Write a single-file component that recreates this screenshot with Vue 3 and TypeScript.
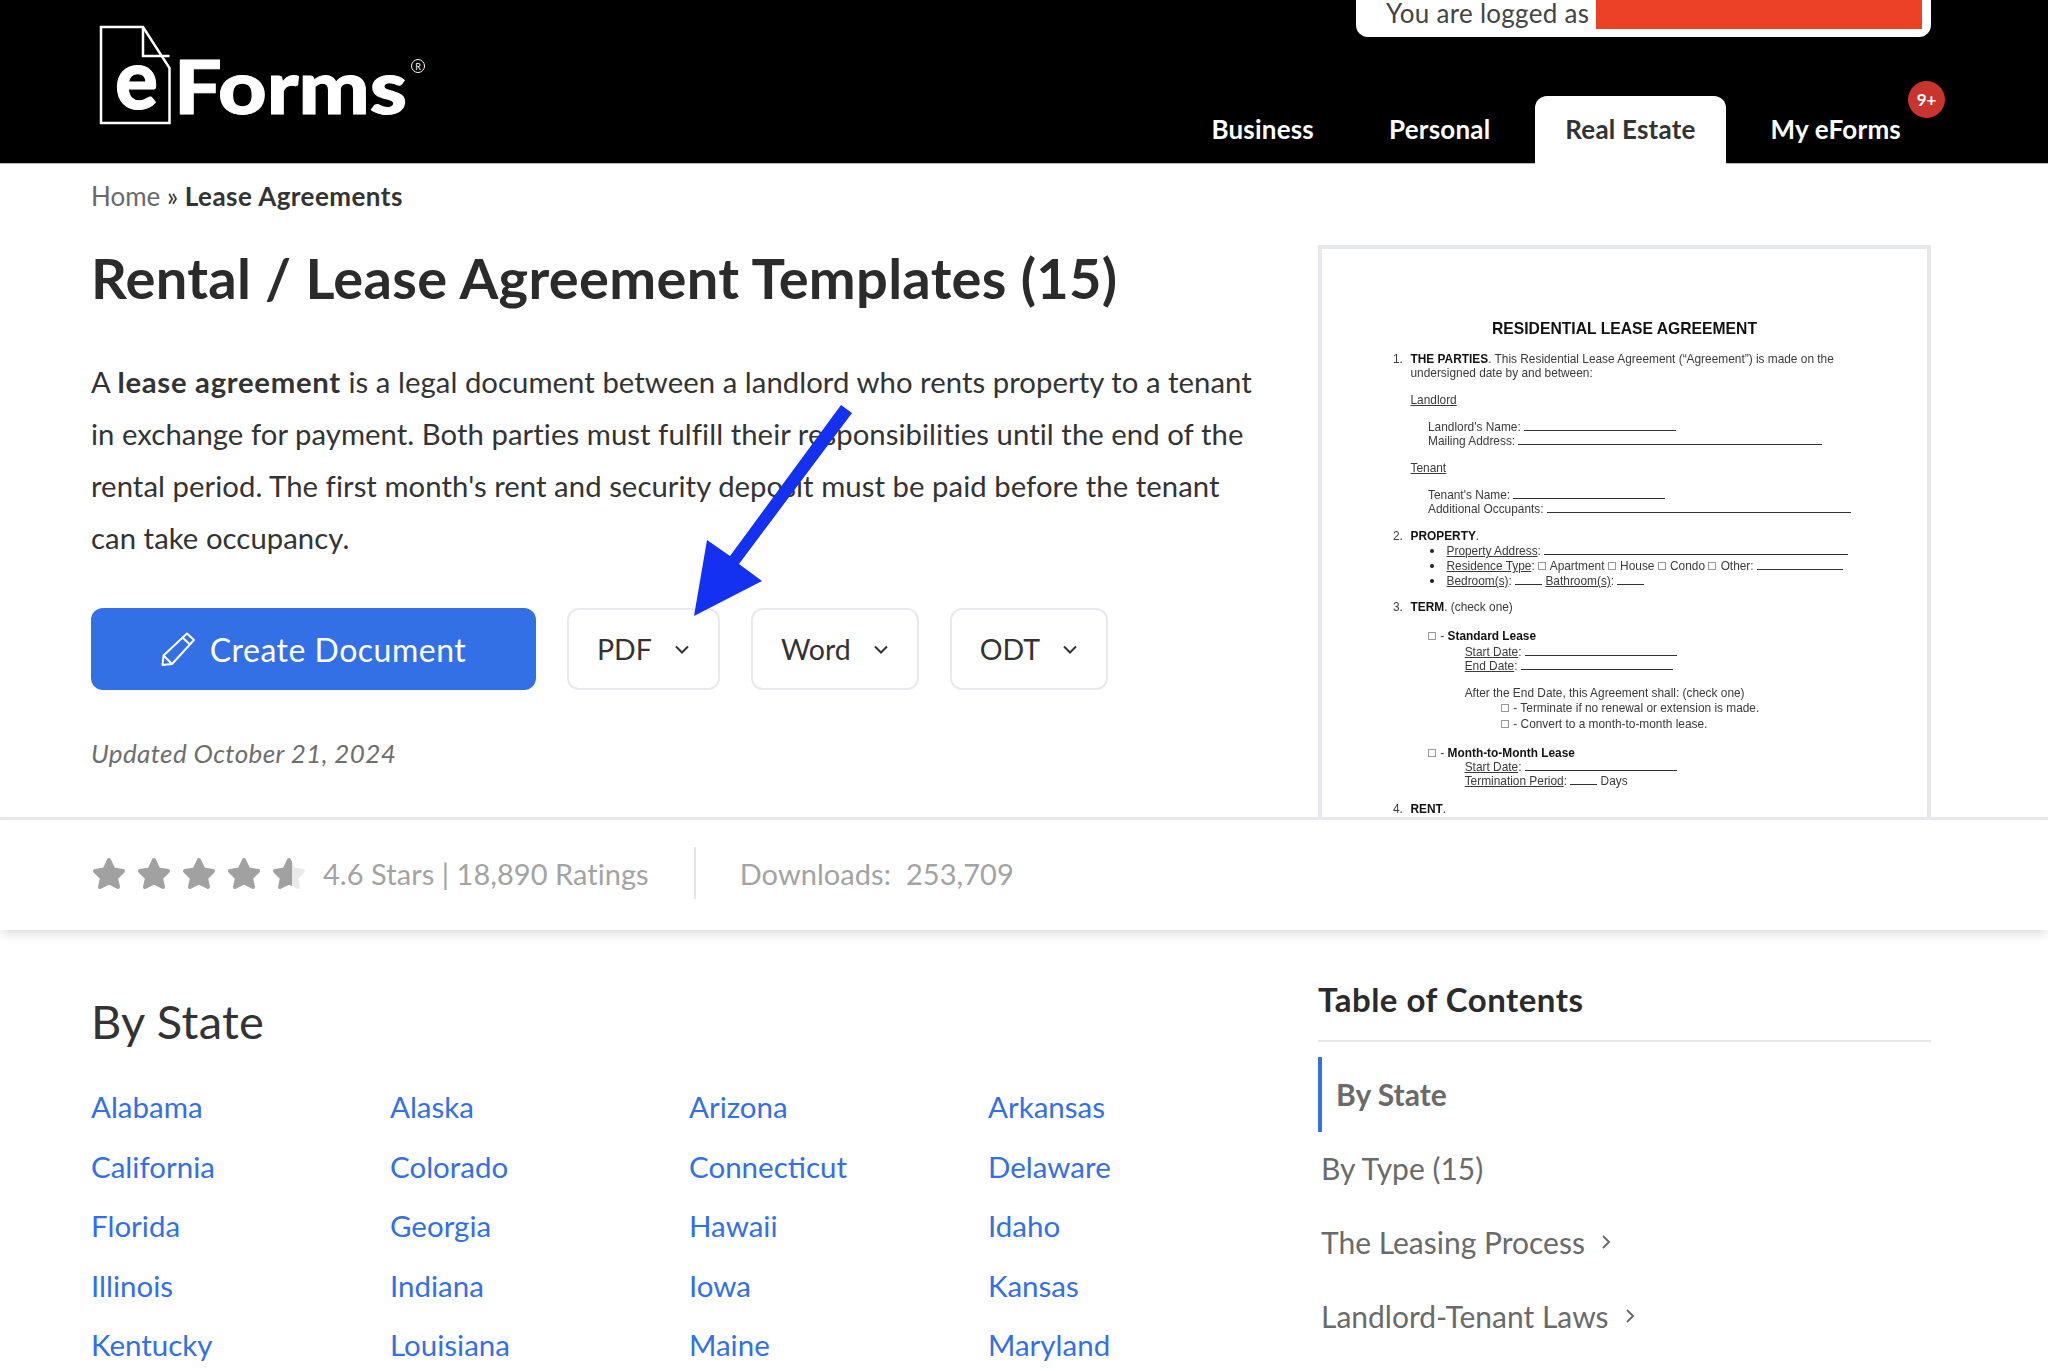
<template>
  <div class="page">
    <header class="site-header">
      <svg class="logo" width="340" height="163" viewBox="91 0 340 163" aria-label="eForms">
        <path d="M101 27 H143 L169.500 68 V123 H101 Z" fill="none" stroke="#fff" stroke-width="2.500" />
        <path d="M143 27 V56 H169.500" fill="none" stroke="#fff" stroke-width="2.500" />
        <text x="115" y="109" class="logo-text" font-size="84" textLength="43" lengthAdjust="spacingAndGlyphs">e</text>
        <text x="174" y="114" class="logo-text" font-size="74" textLength="233" lengthAdjust="spacingAndGlyphs">Forms</text>
        <circle cx="418" cy="66" r="6.500" fill="none" stroke="#fff" stroke-width="1" />
        <text x="418" y="69.500" class="logo-reg" font-size="9" text-anchor="middle">R</text>
      </svg>
      <div class="header-right">
        <div class="login-box">
          <span>You are logged as</span>
          <span class="redacted"></span>
        </div>
        <nav class="main-nav">
          <a v-for="item in navItems" :key="item" class="nav-item" :class="{ active: item === 'Real Estate' }">
            {{ item }}
            <span v-if="item === 'My eForms'" class="badge">9+</span>
          </a>
        </nav>
      </div>
    </header>

    <div class="crumbs">
      <span class="crumb-home">Home</span> <span class="crumb-sep">»</span> <b>Lease Agreements</b>
    </div>

    <section class="intro">
      <div>
        <h1>Rental / Lease Agreement Templates (15)</h1>
        <div class="lead">
          <p>A <b>lease agreement</b> is a legal document between a landlord who rents property to a tenant</p>
          <p>in exchange for payment. Both parties must fulfill their responsibilities until the end of the</p>
          <p>rental period. The first month's rent and security deposit must be paid before the tenant</p>
          <p>can take occupancy.</p>
        </div>
        <div class="actions">
          <button class="btn-create">
            <svg width="34" height="34" viewBox="0 0 34 34" fill="none" stroke="#fff" stroke-width="2" stroke-linejoin="round">
              <path d="M26 1.500 L33 8 L11 32 L1.500 33 L2.500 23.500 Z" />
              <path d="M22 6 L29 12.500 M2.500 23.500 L11 32" />
            </svg>
            Create Document
          </button>
          <button v-for="f in formats" :key="f" class="btn-format">
            {{ f }}
            <svg width="16" height="9" viewBox="0 0 16 9" fill="none" stroke="#333" stroke-width="2">
              <path d="M2 1.500 L8 7.500 L14 1.500" />
            </svg>
          </button>
        </div>
        <div class="updated">Updated October 21, 2024</div>
      </div>

      <div class="preview">
        <div class="doc">
          <div class="doc-title">RESIDENTIAL LEASE AGREEMENT</div>
          <div class="dl first"><span class="num">1.</span><b>THE PARTIES</b>. This Residential Lease Agreement (“Agreement”) is made on the</div>
          <div class="dl i1">undersigned date by and between:</div>
          <div class="dl i1 sp"><u>Landlord</u></div>
          <div class="dl i2 sp">Landlord's Name: <i class="blank b152"></i></div>
          <div class="dl i2">Mailing Address: <i class="blank b304"></i></div>
          <div class="dl i1 sp"><u>Tenant</u></div>
          <div class="dl i2 sp">Tenant's Name: <i class="blank b152"></i></div>
          <div class="dl i2">Additional Occupants: <i class="blank b304"></i></div>
          <div class="dl sp"><span class="num">2.</span><b>PROPERTY</b>.</div>
          <div class="dl i3 li bl"><u>Property Address</u>: <i class="blank b304"></i></div>
          <div class="dl i3 li bl"><u>Residence Type</u>: <i class="box"></i> Apartment <i class="box"></i> House <i class="box"></i> Condo <i class="box"></i> Other: <i class="blank b86"></i></div>
          <div class="dl i3 li bl"><u>Bedroom(s)</u>: <i class="blank b27"></i> <u>Bathroom(s)</u>: <i class="blank b27"></i></div>
          <div class="dl term"><span class="num">3.</span><b>TERM</b>. (check one)</div>
          <div class="dl i2 sp-lg"><i class="box"></i> - <b>Standard Lease</b></div>
          <div class="dl i4 sm">
            <u>Start Date</u>: <i class="blank b152"></i>
          </div>
          <div class="dl i4"><u>End Date</u>: <i class="blank b152"></i></div>
          <div class="dl i4 sp">After the End Date, this Agreement shall: (check one)</div>
          <div class="dl i5 sm"><i class="box"></i> - Terminate if no renewal or extension is made.</div>
          <div class="dl i5 sm"><i class="box"></i> - Convert to a month-to-month lease.</div>
          <div class="dl i2 sp-lg"><i class="box"></i> - <b>Month-to-Month Lease</b></div>
          <div class="dl i4"><u>Start Date</u>: <i class="blank b152"></i></div>
          <div class="dl i4"><u>Termination Period</u>: <i class="blank b27"></i> Days</div>
          <div class="dl rent"><span class="num">4.</span><b>RENT</b>.</div>
        </div>
      </div>
    </section>

    <section class="rating-bar">
      <div class="stars">
        <svg v-for="n in 5" :key="n" width="36" height="34" viewBox="0 0 36 34">
          <defs v-if="n === 5">
            <linearGradient id="partial">
              <stop offset="60%" stop-color="#a1a1a1" />
              <stop offset="60%" stop-color="#e9e9e9" />
            </linearGradient>
          </defs>
          <path
            d="M18 4 L22.500 13.500 L32 15 L25 22 L27 31 L18 26.500 L9 31 L11 22 L4 15 L13.500 13.500 Z"
            :fill="n === 5 ? 'url(#partial)' : '#a1a1a1'"
            :stroke="n === 5 ? 'url(#partial)' : '#a1a1a1'"
            stroke-width="4"
            stroke-linejoin="round"
          />
        </svg>
      </div>
      <span class="rating-text">4.6 Stars | 18,890 Ratings</span>
      <span class="rating-div"></span>
      <span class="rating-text">Downloads:&nbsp; 253,709</span>
    </section>

    <section class="lower">
      <div>
        <h2>By State</h2>
        <div class="state-grid">
          <a v-for="s in states" :key="s">{{ s }}</a>
        </div>
      </div>
      <aside class="toc">
        <div class="toc-title">Table of Contents</div>
        <div class="toc-item current">By State</div>
        <div class="toc-item">By Type (15)</div>
        <div v-for="t in tocMore" :key="t" class="toc-item">
          {{ t }}
          <svg width="10" height="16" viewBox="0 0 10 16" fill="none" stroke="#666" stroke-width="1.800">
            <path d="M2 2 L8 8 L2 14" />
          </svg>
        </div>
      </aside>
    </section>

    <!-- annotation drawn over the page -->
    <svg class="arrow" width="2048" height="1371" viewBox="0 0 2048 1371">
      <path d="M841 405 L852 413 L739 564 L762 581 L694 616 L707 540 L730 556 Z" fill="#1430f0" />
    </svg>
  </div>
</template>

<script setup lang="ts">
const navItems: string[] = ['Business', 'Personal', 'Real Estate', 'My eForms'];
const formats: string[] = ['PDF', 'Word', 'ODT'];
const tocMore: string[] = ['The Leasing Process', 'Landlord-Tenant Laws'];
const states: string[] = [
  'Alabama', 'Alaska', 'Arizona', 'Arkansas',
  'California', 'Colorado', 'Connecticut', 'Delaware',
  'Florida', 'Georgia', 'Hawaii', 'Idaho',
  'Illinois', 'Indiana', 'Iowa', 'Kansas',
  'Kentucky', 'Louisiana', 'Maine', 'Maryland',
];
</script>

<style>
html, body { margin: 0; background: #fff; }
</style>

<style scoped>
.page {
  position: relative;
  width: 2048px;
  height: 1371px;
  overflow: hidden;
  font-family: Lato, "Open Sans", sans-serif;
  color: #333;
  background: #fff;
}

.site-header {
  height: 163px;
  background: #000;
  border-bottom: 1px solid #bbb;
  display: flex;
  justify-content: space-between;
  padding: 0 117px 0 91px;
}
.logo { display: block; }
.logo-text { font-family: Lato, sans-serif; font-weight: 900; fill: #fff; stroke: #fff; stroke-width: 1; }
.logo-reg { font-family: Lato, sans-serif; fill: #fff; }

.header-right {
  display: flex;
  flex-direction: column;
  justify-content: space-between;
  align-items: flex-end;
}
.login-box {
  width: 575px;
  height: 37px;
  box-sizing: border-box;
  background: #fff;
  border-radius: 0 0 12px 12px;
  display: flex;
  justify-content: space-between;
  padding: 0 9px 0 30px;
  font-size: 26px;
  line-height: 26px;
  letter-spacing: 0.3px;
  color: #444;
}
.redacted { width: 326px; height: 29px; background: #ec4126; }

.main-nav { display: flex; gap: 15px; }
.nav-item {
  position: relative;
  height: 67px;
  line-height: 66px;
  padding: 0 30px;
  font-size: 26px;
  font-weight: 700;
  letter-spacing: 0.2px;
  color: #fff;
  border-radius: 12px 12px 0 0;
  margin-bottom: -1px;
  padding-bottom: 1px;
}
.nav-item.active { background: #fff; color: #333; }
.badge {
  position: absolute;
  right: -14px;
  top: -15px;
  width: 37px;
  height: 37px;
  border-radius: 50%;
  background: #c9342e;
  color: #fff;
  font-size: 17px;
  letter-spacing: 0;
  line-height: 37px;
  text-align: center;
}

.crumbs {
  padding: 17px 0 34px 91px;
  font-size: 26px;
  line-height: 30px;
}
.crumb-home { color: #6a6a6a; }
.crumbs b { font-weight: 700; letter-spacing: 0.45px; }

.intro {
  display: grid;
  grid-template-columns: 1fr 613px;
  padding: 0 117px 0 91px;
  height: 572px;
}
h1 {
  margin: 0;
  font-size: 56px;
  line-height: 66px;
  font-weight: 700;
  letter-spacing: 0.3px;
  color: #2b2b2b;
}
.lead {
  margin-top: 45px;
  font-size: 29.300px;
  line-height: 52px;
  letter-spacing: 0.05px;
}
.lead p { margin: 0; white-space: nowrap; }
.lead b { font-weight: 700; letter-spacing: 0.7px; }

.actions { display: flex; gap: 31px; margin-top: 44px; }
button {
  font-family: inherit;
  box-sizing: border-box;
  height: 82px;
  display: flex;
  align-items: center;
  cursor: pointer;
}
.btn-create {
  width: 445px;
  justify-content: center;
  gap: 15px;
  font-size: 32px;
  letter-spacing: 0.5px;
  background: #336fe5;
  color: #fff;
  border: 0;
  border-radius: 12px;
}
.btn-format {
  padding: 0 28px;
  gap: 22px;
  font-size: 28.500px;
  background: #fff;
  color: #333;
  border: 2px solid #e8e8ee;
  border-radius: 12px;
}
.updated {
  margin-top: 48px;
  font-size: 26px;
  line-height: 30px;
  font-style: italic;
  letter-spacing: 0.38px;
  color: #6e6e6e;
}

.preview {
  box-sizing: border-box;
  border: 4px solid #e6e8ec;
  border-bottom: 0;
  overflow: hidden;
  background: #fff;
}
.doc {
  padding: 70px 0 0 71px;
  font-family: "Liberation Sans", Arial, sans-serif;
  font-size: 11.880px;
  line-height: 14px;
  color: #3a3a3a;
  filter: blur(0.35px);
}
.doc-title {
  font-size: 15.700px;
  font-weight: 700;
  line-height: 20px;
  color: #111;
  text-align: center;
  margin-left: -71px;
}
.dl { position: relative; white-space: nowrap; padding-left: 17.500px; }
.dl b { color: #111; }
.num { display: inline-block; width: 17.500px; margin-left: -17.500px; }
.first { margin-top: 13px; }
.sp { margin-top: 13px; }
.sp-lg { margin-top: 15px; }
.sm { margin-top: 1.500px; }
.bl { margin-top: 1px; }
.term { margin-top: 12px; }
.rent { margin-top: 14.500px; }
.i1 { padding-left: 17.500px; }
.i2 { padding-left: 35px; }
.i3 { padding-left: 53.500px; }
.i4 { padding-left: 71.700px; }
.i5 { padding-left: 108px; }
.li::before {
  content: "";
  position: absolute;
  left: 37px;
  top: 5px;
  width: 4px;
  height: 4px;
  border-radius: 50%;
  background: #222;
}
.blank {
  display: inline-block;
  height: 10px;
  border-bottom: 1px solid #333;
  vertical-align: baseline;
}
.b152 { width: 152px; }
.b304 { width: 304px; }
.b86 { width: 86px; }
.b27 { width: 27px; }
.box {
  display: inline-block;
  width: 6px;
  height: 6px;
  border: 1px solid #999;
  margin-right: 1px;
}

.rating-bar {
  position: relative;
  box-sizing: border-box;
  height: 113px;
  border-top: 3px solid #e8e8ee;
  background: #fff;
  box-shadow: 0 6px 10px -2px rgba(0, 0, 0, 0.14);
  display: flex;
  align-items: center;
  padding: 0 0 4px 91px;
}
.stars { display: flex; gap: 9px; margin-right: 16px; }
.stars svg { display: block; }
.rating-text { font-size: 29px; letter-spacing: 0.05px; color: #a3a3a3; }
.rating-div { width: 2px; height: 52px; background: #e6e6e6; margin: 0 44px 0 45px; }

.lower {
  display: grid;
  grid-template-columns: 1fr 613px;
  padding: 0 117px 0 91px;
}
h2 {
  margin: 63px 0 0;
  font-size: 47px;
  line-height: 56px;
  font-weight: 400;
  letter-spacing: 0.3px;
  color: #333;
}
.state-grid {
  margin-top: 28px;
  display: grid;
  grid-template-columns: repeat(4, 299px);
  grid-auto-rows: 59.500px;
  align-items: center;
  font-size: 29.500px;
  color: #336fe5;
}

.toc { padding-top: 49px; }
.toc-title {
  font-size: 33px;
  line-height: 40px;
  font-weight: 700;
  letter-spacing: 0.5px;
  color: #2b2b2b;
  padding-bottom: 21px;
  border-bottom: 2px solid #e6e8e8;
  margin-bottom: 15px;
}
.toc-item {
  height: 74px;
  box-sizing: border-box;
  padding-bottom: 2px;
  display: flex;
  align-items: center;
  gap: 16px;
  padding-left: 3px;
  font-size: 30px;
  color: #6a6a6a;
}
.toc-item.current {
  height: 75px;
  font-weight: 700;
  padding-left: 14px;
  border-left: 4px solid #336fe5;
}

.arrow { position: absolute; left: 0; top: 0; pointer-events: none; }
</style>
